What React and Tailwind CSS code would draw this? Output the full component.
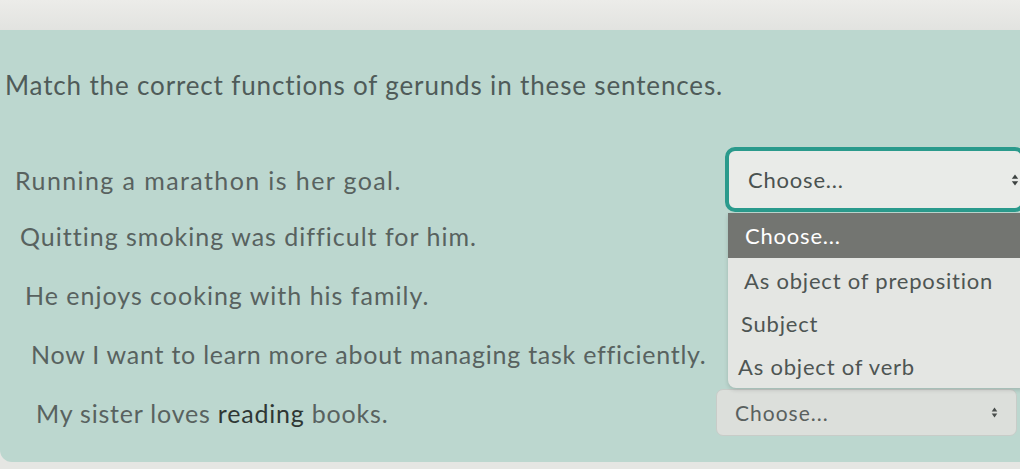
import React from "react";

const rows = [
  { text: "Running a marathon is her goal.", pad: "pl-[15px]", col: "grid-cols-[710px_1fr]", track: "tracking-[1.4px]" },
  { text: "Quitting smoking was difficult for him.", pad: "pl-[20px]", col: "grid-cols-[705px_1fr]", track: "tracking-[1px]" },
  { text: "He enjoys cooking with his family.", pad: "pl-[25px]", col: "grid-cols-[700px_1fr]", track: "tracking-[1px]" },
  { text: "Now I want to learn more about managing task efficiently.", pad: "pl-[31px]", col: "grid-cols-[690px_1fr]", track: "tracking-[0.75px]" },
  { text: null, pad: "pl-[36px]", col: "grid-cols-[680px_1fr]", track: "tracking-[0.8px]" },
];

const Arrows = ({ className }) => (
  <svg viewBox="0 0 10 16" className={className} fill="currentColor">
    <path d="M5 1 L9 6.5 H1 Z" />
    <path d="M5 15 L9 9.5 H1 Z" />
  </svg>
);

const App = () => {
  return (
    <div className="w-[1020px] h-[469px] overflow-hidden bg-[#e5e6e3] font-['Lato','Open_Sans',sans-serif] text-[#58625f]">
      <div className="h-[30px] bg-gradient-to-b from-[#ecece9] to-[#e2e3e0]" />

      <div className="relative h-[432px] bg-[#bcd7cf] rounded-bl-[12px]">
        <h1 className="pt-[39px] pl-[5px] text-[26px] leading-[32px] tracking-[0.85px] text-[#4f5b59]">
          Match the correct functions of gerunds in these sentences.
        </h1>

        <div className="mt-[46px] flex flex-col">
          {rows.map((row, i) => (
            <div key={i} className={`grid ${row.col} ${row.pad} h-[59px] items-center`}>
              <div className={`text-[25px] leading-[30px] ${row.track} whitespace-nowrap`}>
                {row.text ? (
                  row.text
                ) : (
                  <>
                    My sister loves <span className="text-[#2f3735]">reading</span> books.
                  </>
                )}
              </div>
              {i === 0 && (
                <div className="h-[65px] w-[300px] flex items-center justify-between pl-[19px] pr-[2px] rounded-[10px] border-[4px] border-[#2a9a8c] bg-[#e9ebe8] text-[22px] tracking-[0.8px] text-[#4a5250]">
                  Choose...
                  <Arrows className="w-[8px] h-[14px] text-[#3c4240]" />
                </div>
              )}
              {i === 4 && (
                <div className="h-[47px] w-[301px] flex items-center justify-between pl-[18px] pr-[18px] rounded-[7px] border border-[#c8ccc8] bg-[#dcdfdb] text-[21px] tracking-[1px] text-[#5a615f]">
                  Choose...
                  <Arrows className="w-[7px] h-[13px] text-[#4a4f4d]" />
                </div>
              )}
            </div>
          ))}
        </div>

        {/* open dropdown list */}
        <div className="absolute left-[728px] top-[183px] w-[300px] h-[175px] bg-[#e4e6e3] rounded-b-[8px] shadow-[0_2px_4px_rgba(0,0,0,0.15)] overflow-hidden text-[22px] tracking-[0.8px] text-[#4e5553]">
          <div className="h-[45px] flex items-center pl-[17px] bg-[#737571] text-white">Choose...</div>
          <div className="h-[44px] flex items-center pl-[16px]">As object of preposition</div>
          <div className="h-[43px] flex items-center pl-[13px]">Subject</div>
          <div className="h-[43px] flex items-center pl-[10px]">As object of verb</div>
        </div>
      </div>
    </div>
  );
};

export default App;
